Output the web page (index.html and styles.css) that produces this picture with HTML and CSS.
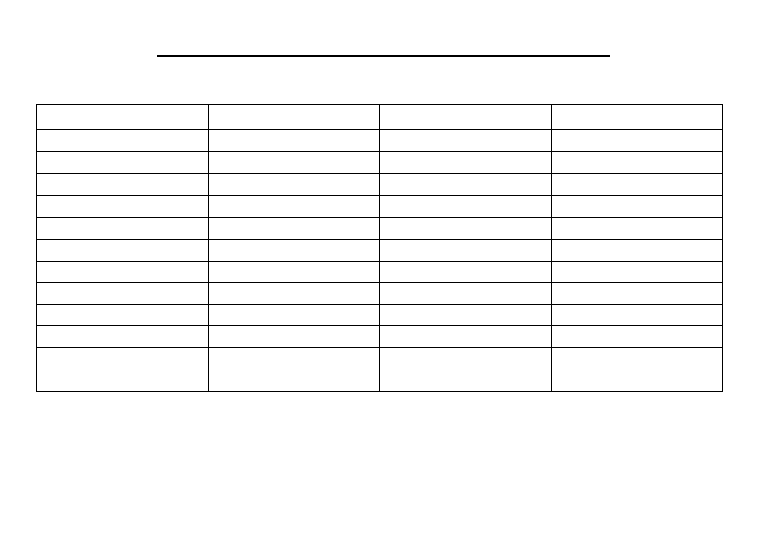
FILE: index.html
```html
<!DOCTYPE html>
<html>
<head>
<meta charset="utf-8">
<link rel="stylesheet" href="styles.css">
</head>
<body>
<div class="page">
  <div class="title-line"></div>
  <table class="grid">
    <colgroup><col class="c-a"><col class="c-b"><col class="c-a"><col class="c-b"></colgroup>
    <tr class="r-head"><td></td><td></td><td></td><td></td></tr>
    <tr class="r22"><td></td><td></td><td></td><td></td></tr>
    <tr class="r22"><td></td><td></td><td></td><td></td></tr>
    <tr class="r22"><td></td><td></td><td></td><td></td></tr>
    <tr class="r22"><td></td><td></td><td></td><td></td></tr>
    <tr class="r22"><td></td><td></td><td></td><td></td></tr>
    <tr class="r22"><td></td><td></td><td></td><td></td></tr>
    <tr class="r21"><td></td><td></td><td></td><td></td></tr>
    <tr class="r22"><td></td><td></td><td></td><td></td></tr>
    <tr class="r21"><td></td><td></td><td></td><td></td></tr>
    <tr class="r22"><td></td><td></td><td></td><td></td></tr>
    <tr class="r-last"><td></td><td></td><td></td><td></td></tr>
  </table>
</div>
</body>
</html>
```
FILE: styles.css
```css
html, body {
  margin: 0;
  padding: 0;
  background: #fff;
  font-family: "Liberation Sans", Arial, sans-serif;
}
.page {
  width: 768px;
  height: 544px;
  padding-top: 55px;
  box-sizing: border-box;
}
.title-line {
  width: 453px;
  height: 2px;
  background: #000;
  margin-left: 157px;
}
.grid {
  border-collapse: collapse;
  margin-left: 36px;
  margin-top: 47px;
  table-layout: fixed;
  width: 687px;
}
.c-a { width: 172px; }
.c-b { width: 171px; }
.grid td {
  border: 1px solid #000;
  padding: 0;
}
.r-head { height: 25px; }
.r22 { height: 22px; }
.r21 { height: 21px; }
.r-last { height: 44px; }
```
